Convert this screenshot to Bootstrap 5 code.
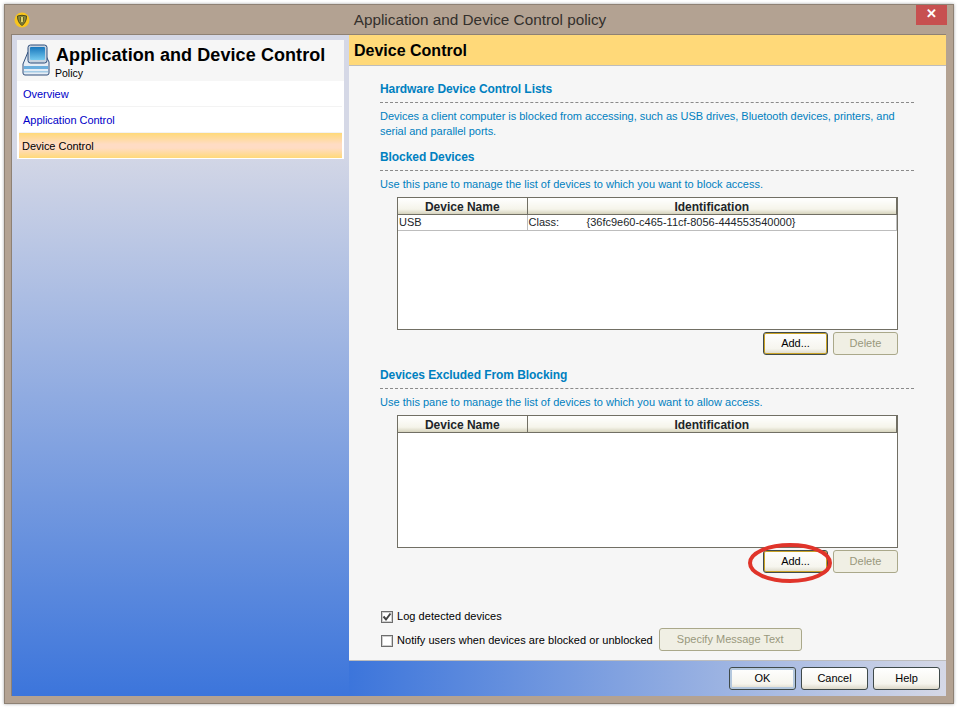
<!DOCTYPE html>
<html lang="en">
<head>
<meta charset="utf-8">
<title>Application and Device Control policy</title>
<link href="https://cdn.jsdelivr.net/npm/bootstrap@5.3.0/dist/css/bootstrap.min.css" rel="stylesheet">
<style>
html,body{height:100%;background:#fff;margin:0;}
body{font-family:"Liberation Sans",Arial,sans-serif;font-size:11px;color:#000;padding:4px 4px 3px 4px;overflow:hidden;line-height:1.2;}
.win{width:950px;height:700px;background:#b3a292;border:1px solid #8e8174;box-shadow:0 0 3px rgba(0,0,0,.35);padding:0 7px 7px 6px;display:flex;flex-direction:column;}
.win-title{height:29px;flex:none;position:relative;}
.shield{margin-left:3px;flex:none;}
.win-title-text{font-size:15.3px;color:#33302c;line-height:30px;flex:1;text-align:center;padding-left:14px;}
.close-x{width:31px;height:20px;background:#c75050;color:#fff;font-size:13px;font-weight:700;line-height:18px;text-align:center;margin-right:-1px;}
.client{flex:1;min-height:0;border-top:1px solid #8e8174;border-left:1px solid #8e8174;background:linear-gradient(180deg,#d5d8e6 0,#d5d8e6 17%,#3c75db 100%);}
.side{width:337px;flex:none;padding:5px 0 0 5px;}
.side-box{width:327px;height:119px;background:#fff;padding:0 2px 2px 2px;}
.side-head{height:41px;background:#f6f6f6;margin:0 -2px;padding:0 0 0 5px;}
.pc-icon{margin:4px 6px 0 0;flex:none;}
.side-title{font-size:18px;font-weight:700;line-height:20px;padding-top:5px;letter-spacing:.08px;}
.side-sub{font-size:10.5px;line-height:12px;margin:2px 0 0 -1px;}
.side-item{height:26px;line-height:27px;padding-left:4px;color:#0000c8;font-size:11px;border-bottom:1px solid #f3f3f3;text-decoration:none;display:block;letter-spacing:-.03px;}
.side-item.sel{color:#000;border:0;background:linear-gradient(180deg,#ffd979 0,#ffdcc4 45%,#ffdcc4 60%,#ffd979 100%);height:25px;padding-left:3px;}
.main{flex:1;min-width:0;display:flex;flex-direction:column;}
.main-head{height:31px;flex:none;background:#ffd979;border-bottom:1px solid #bdbdbd;font-size:16px;font-weight:700;line-height:32px;padding-left:5px;}
.main-body{flex:1;min-height:0;background:#f6f6f6;padding:16px 31px 0 31px;color:#0080c0;}
.main-foot{height:36px;flex:none;border-top:1px solid #bdbdbd;background:linear-gradient(90deg,#3c75db 0,#d5d8e6 100%);padding:6px 6px 0 0;}
.sec-h{font-size:12px;font-weight:700;line-height:14px;height:14px;color:#0080c0;margin:0;letter-spacing:-.07px;}
.sec-rule{border-top:1px dashed #8a8a8a;height:0;margin-top:6px;width:534px;}
.sec-text{line-height:15px;margin-top:6px;font-size:11px;letter-spacing:.02px;width:534px;}
.sec-text.tight{letter-spacing:-.025px;}
.sec-gap{height:11px;}
.sec-gap.wide{height:13px;}
.dev-grid{width:501px;margin-left:17px;margin-top:5px;background:#fff;border:1px solid #716f64;color:#000;}
.grid-a{height:133px;}
.grid-b{height:133px;}
.dev-grid .table{margin:0;font-size:11px;table-layout:fixed;--bs-table-bg:transparent;}
.dev-grid th{height:16px;padding:0;text-align:center;font-size:12px;line-height:14px;font-weight:700;background:linear-gradient(180deg,#fff 0,#f5f4ea 70%,#d6d3bd 100%);border:0;border-right:1px solid #716f64;border-bottom:1px solid #716f64;}
.dev-grid td{height:16px;padding:0 0 0 1px;line-height:14px;border:0;border-right:1px solid #bdbdbd;border-bottom:1px solid #bdbdbd;}
.col-n{width:129px;}
.cls{display:inline-block;width:58px;}
.xp{font-family:"Liberation Sans",Arial,sans-serif;font-size:11px;height:23px;line-height:19px;padding:0;border:1px solid #3f4a4a;border-radius:3px;color:#000;background:linear-gradient(180deg,#fff 0,#f6f5ee 75%,#dcd8c8 100%);--bs-btn-hover-bg:#fff;}
.xp.off{border-color:#aaa88a;background:#f0efe4;color:#99987c;opacity:1;}
.xp.focus{box-shadow:inset 0 0 0 1px #c9a227;}
.xp.def{box-shadow:inset 0 0 0 2px #b4c8de;}
.b-add{width:65px;}
.b-del{width:65px;}
.b-foot{width:67px;}
.b-msg{width:143px;margin:-4px 0 0 6px;}
.btn-row{width:518px;margin-top:2px;gap:5px;position:relative;}
.foot-gap{gap:5px;}
.ring{position:absolute;left:-15px;top:-7px;width:84px;height:40px;pointer-events:none;}
.chk{width:12px;height:12px;border:1px solid #6d6d6d;box-shadow:inset 0 0 0 1px #cfcfcf;background:#fff;flex:none;margin-right:4px;display:flex;}
.chk svg{width:10px;height:10px;}
.opt{color:#000;letter-spacing:.04px;}
.opt1{margin-top:37px;height:14px;margin-left:1px;}
.opt2{margin-top:5px;height:24px;margin-left:1px;}
</style>
</head>
<body>
<div class="win">
  <div class="win-title d-flex align-items-center">
    <svg width="16" height="16" viewBox="0 0 16 16" class="shield"><circle cx="8" cy="8" r="7.500" fill="#f8c51c"/><path d="M3.500 4 Q8 2.500 12.500 4 Q12.500 10.500 8 13.500 Q3.500 10.500 3.500 4Z" fill="#8b8a3e" stroke="#4b4a1e"/><path d="M6.500 5v4.500L8 11.500l1.500-2V5" fill="#dcd36a" stroke="#3f3e18" stroke-width=".7"/></svg>
    <div class="win-title-text">Application and Device Control policy</div>
    <div class="close-x align-self-start">&#x2715;</div>
  </div>
  <div class="client d-flex">
    <div class="side">
      <div class="side-box">
        <div class="side-head d-flex">
          <svg width="28" height="33" viewBox="0 0 28 33" class="pc-icon">
            <defs><linearGradient id="scr" x1="0" y1="0" x2="0" y2="1"><stop offset="0" stop-color="#1877bd"/><stop offset="1" stop-color="#74c9ef"/></linearGradient></defs>
            <path d="M6 8h16l5 10v11a2 2 0 0 1-2 2H3a2 2 0 0 1-2-2v-9z" fill="#e6edf5" stroke="#2f4f7c"/>
            <rect x="2" y="22" width="24" height="3" fill="#6aaedd"/>
            <rect x="2" y="27" width="24" height="1.500" fill="#a3cbe6"/>
            <rect x="6" y="1" width="19" height="18" rx="2.500" fill="#c7d3e0" stroke="#2f4f7c"/>
            <rect x="8" y="3" width="15" height="13" rx="1" fill="url(#scr)"/>
          </svg>
          <div>
            <div class="side-title">Application and Device Control</div>
            <div class="side-sub">Policy</div>
          </div>
        </div>
        <a class="side-item" href="#">Overview</a>
        <a class="side-item" href="#">Application Control</a>
        <a class="side-item sel" href="#">Device Control</a>
      </div>
    </div>
    <div class="main">
      <div class="main-head">Device Control</div>
      <div class="main-body">
        <h6 class="sec-h">Hardware Device Control Lists</h6>
        <div class="sec-rule"></div>
        <div class="sec-text tight">Devices a client computer is blocked from accessing, such as USB drives, Bluetooth devices, printers, and serial and parallel ports.</div>
        <div class="sec-gap"></div>
        <h6 class="sec-h">Blocked Devices</h6>
        <div class="sec-rule"></div>
        <div class="sec-text">Use this pane to manage the list of devices to which you want to block access.</div>
        <div class="dev-grid grid-a">
          <table class="table">
            <thead><tr><th class="col-n">Device Name</th><th>Identification</th></tr></thead>
            <tbody><tr><td>USB</td><td><span class="cls">Class:</span>{36fc9e60-c465-11cf-8056-444553540000}</td></tr></tbody>
          </table>
        </div>
        <div class="btn-row d-flex justify-content-end">
          <button class="btn xp focus b-add">Add...</button>
          <button class="btn xp off b-del" disabled>Delete</button>
        </div>
        <div class="sec-gap wide"></div>
        <h6 class="sec-h">Devices Excluded From Blocking</h6>
        <div class="sec-rule"></div>
        <div class="sec-text">Use this pane to manage the list of devices to which you want to allow access.</div>
        <div class="dev-grid grid-b">
          <table class="table">
            <thead><tr><th class="col-n">Device Name</th><th>Identification</th></tr></thead>
          </table>
        </div>
        <div class="btn-row d-flex justify-content-end">
          <div class="position-relative d-flex">
            <button class="btn xp focus b-add">Add...</button>
            <svg class="ring" viewBox="0 0 84 40"><ellipse cx="42" cy="20" rx="40" ry="18" fill="none" stroke="#e0342a" stroke-width="4"/></svg>
          </div>
          <button class="btn xp off b-del" disabled>Delete</button>
        </div>
        <div class="opt opt1 d-flex align-items-center">
          <span class="chk"><svg viewBox="0 0 10 10"><path d="M1.500 4.500L4 7.500 8.500 1.500" fill="none" stroke="#444" stroke-width="2"/></svg></span>Log detected devices
        </div>
        <div class="opt opt2 d-flex align-items-center">
          <span class="chk"></span>Notify users when devices are blocked or unblocked
          <button class="btn xp off b-msg" disabled>Specify Message Text</button>
        </div>
      </div>
      <div class="main-foot d-flex justify-content-end foot-gap">
        <button class="btn xp def b-foot">OK</button>
        <button class="btn xp b-foot">Cancel</button>
        <button class="btn xp b-foot">Help</button>
      </div>
    </div>
  </div>
</div>
<script src="https://cdn.jsdelivr.net/npm/bootstrap@5.3.0/dist/js/bootstrap.bundle.min.js"></script>
</body>
</html>
